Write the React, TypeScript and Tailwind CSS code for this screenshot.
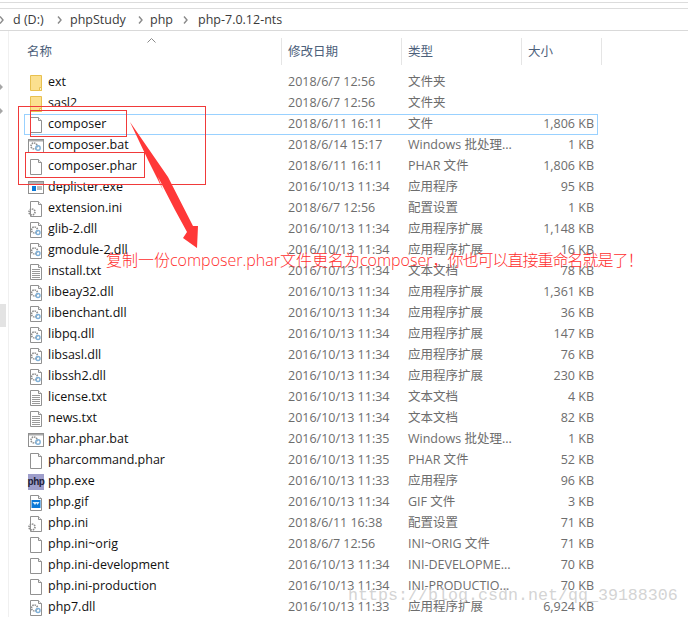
const rows: [string, string, string, string, string][] = [
  ["folder", "ext", "2018/6/7 12:56", "文件夹", ""],
  ["folder", "sasl2", "2018/6/7 12:56", "文件夹", ""],
  ["blank", "composer", "2018/6/11 16:11", "文件", "1,806 KB"],
  ["bat", "composer.bat", "2018/6/14 15:17", "Windows 批处理...", "1 KB"],
  ["blank", "composer.phar", "2018/6/11 16:11", "PHAR 文件", "1,806 KB"],
  ["exe", "deplister.exe", "2016/10/13 11:34", "应用程序", "95 KB"],
  ["ini", "extension.ini", "2018/6/7 12:56", "配置设置", "1 KB"],
  ["dll", "glib-2.dll", "2016/10/13 11:34", "应用程序扩展", "1,148 KB"],
  ["dll", "gmodule-2.dll", "2016/10/13 11:34", "应用程序扩展", "16 KB"],
  ["txt", "install.txt", "2016/10/13 11:34", "文本文档", "78 KB"],
  ["dll", "libeay32.dll", "2016/10/13 11:34", "应用程序扩展", "1,361 KB"],
  ["dll", "libenchant.dll", "2016/10/13 11:34", "应用程序扩展", "36 KB"],
  ["dll", "libpq.dll", "2016/10/13 11:34", "应用程序扩展", "147 KB"],
  ["dll", "libsasl.dll", "2016/10/13 11:34", "应用程序扩展", "76 KB"],
  ["dll", "libssh2.dll", "2016/10/13 11:34", "应用程序扩展", "230 KB"],
  ["txt", "license.txt", "2016/10/13 11:34", "文本文档", "4 KB"],
  ["txt", "news.txt", "2016/10/13 11:34", "文本文档", "82 KB"],
  ["bat", "phar.phar.bat", "2016/10/13 11:35", "Windows 批处理...", "1 KB"],
  ["blank", "pharcommand.phar", "2016/10/13 11:35", "PHAR 文件", "52 KB"],
  ["php", "php.exe", "2016/10/13 11:33", "应用程序", "96 KB"],
  ["gif", "php.gif", "2016/10/13 11:34", "GIF 文件", "3 KB"],
  ["ini", "php.ini", "2018/6/11 16:38", "配置设置", "71 KB"],
  ["blank", "php.ini~orig", "2018/6/7 12:56", "INI~ORIG 文件", "71 KB"],
  ["blank", "php.ini-development", "2016/10/13 11:34", "INI-DEVELOPME...", "70 KB"],
  ["blank", "php.ini-production", "2016/10/13 11:34", "INI-PRODUCTIO...", "70 KB"],
  ["dll", "php7.dll", "2016/10/13 11:33", "应用程序扩展", "6,924 KB"],
]

const page = "M2.5 .5H10.5L13.5 3.5V15.5H2.5Z"

function Gear({ x, y }: { x: number; y: number }) {
  return (
    <g>
      <circle cx={x} cy={y} r="3" fill="none" stroke="#8c8c8c" strokeWidth="1.6" strokeDasharray="1.5 0.8" />
      <circle cx={x} cy={y} r="1" fill="#fff" />
    </g>
  )
}

function FileIcon({ kind }: { kind: string }) {
  if (kind === "folder") {
    return (
      <svg width="16" height="16" viewBox="0 0 16 16">
        <path d="M2.5 .5H13.5V15.5H2.5Z" fill="#fbe08f" stroke="#e8c04f" />
        <path d="M11.5 15.5V12.5H13.5V15.5Z" fill="#fff3c4" stroke="#e8c04f" />
      </svg>
    )
  }
  if (kind === "exe") {
    return (
      <svg width="16" height="16" viewBox="0 0 16 16">
        <rect x=".5" y="1.5" width="15" height="12" fill="#fff" stroke="#8f8f8f" />
        <rect x="1" y="2" width="14" height="2" fill="#b5b5b5" />
        <rect x="4" y="6" width="4" height="5" fill="#0a78d7" />
        <path d="M9 7H14M9 9H14" stroke="#777" />
      </svg>
    )
  }
  if (kind === "bat") {
    return (
      <svg width="16" height="16" viewBox="0 0 16 16">
        <rect x=".5" y="1.5" width="15" height="13" fill="#fff" stroke="#8f8f8f" />
        <rect x="1" y="2" width="14" height="1.5" fill="#a9a9a9" />
        <Gear x={6} y={8} />
        <circle cx="10" cy="10" r="2.2" fill="none" stroke="#7fb0d8" strokeWidth="1.4" />
      </svg>
    )
  }
  if (kind === "php") {
    return (
      <div className="flex h-[16px] w-[16px] items-center justify-center bg-[#9e9ecb] text-[10px] leading-none font-bold tracking-[-0.5px] text-[#1f1f3a] [font-family:'Liberation_Sans',sans-serif]">
        php
      </div>
    )
  }
  return (
    <svg width="16" height="16" viewBox="0 0 16 16">
      <path d={page} fill="#fff" stroke="#919191" />
      <path d="M10.5 .5V3.5H13.5" fill="#f2f2f2" stroke="#919191" />
      {kind === "txt" && <path d="M4 5.5H12M4 7.5H12M4 9.5H12M4 11.5H12M4 13.5H12" stroke="#9a9a9a" />}
      {kind === "dll" && (
        <>
          <Gear x={6.5} y={8} />
          <circle cx="10" cy="10.5" r="2" fill="none" stroke="#7fb0d8" strokeWidth="1.4" />
        </>
      )}
      {kind === "ini" && <Gear x={4} y={11} />}
      {kind === "gif" && (
        <>
          <rect x="3.5" y="5" width="9" height="8" fill="#0a78d7" />
          <path d="M4.5 7H11.5L9.5 10L8.5 8L7 10Z" fill="#d5ecfb" />
        </>
      )}
    </svg>
  )
}

function Chevron() {
  return (
    <svg width="5" height="8" viewBox="0 0 5 8" className="shrink-0">
      <path d="M1 .5L4 4L1 7.5" fill="none" stroke="#8a8a8a" strokeWidth="1.4" />
    </svg>
  )
}

function App() {
  return (
    <div className="relative h-[617px] w-[688px] overflow-hidden bg-white text-[12.5px] [font-family:'Open_Sans','Noto_Sans_CJK_SC',sans-serif]">
      <div className="mt-[2px] h-[7px] border-y border-[#dcdcdc]" />
      <div className="flex h-[22px] items-center border-b border-[#d9d9d9] pt-[1px] text-[#3a3a3a]">
        <div className="-ml-[1px] w-[14px]">
          <Chevron />
        </div>
        <span className="w-[44px]">d (D:)</span>
        <Chevron />
        <span className="ml-[8px] w-[60px]">phpStudy</span>
        <span className="ml-[8px]">
          <Chevron />
        </span>
        <span className="ml-[7px] w-[33px]">php</span>
        <Chevron />
        <span className="ml-[10px]">php-7.0.12-nts</span>
      </div>

      <div className="flex">
        <div className="w-[9px] shrink-0 pt-[50px]">
          <svg width="4" height="34" viewBox="0 0 4 34">
            <path d="M0 3L3 6L0 9ZM0 27L3 30L0 33Z" fill="#a6a6a6" />
          </svg>
          <div className="mt-[189px] h-[23px] w-[6px] bg-[#e3e3e3]" />
        </div>
        <div className="ml-[-1px] min-w-0 flex-1 border-l border-[#f0f0f0]">
          <div className="relative mt-[7px] flex h-[27px] text-[#4c607a]">
            <div className="w-[273px] border-r border-[#e5e5e5] pl-[18px] leading-[27px]">名称</div>
            <div className="w-[120px] border-r border-[#e5e5e5] pl-[6px] leading-[27px]">修改日期</div>
            <div className="w-[120px] border-r border-[#e5e5e5] pl-[6px] leading-[27px]">类型</div>
            <div className="w-[80px] border-r border-[#e5e5e5] pl-[6px] leading-[27px]">大小</div>
            <svg width="9" height="5" viewBox="0 0 9 5" className="absolute top-0 left-[138px]">
              <path d="M.5 4.5L4.5 .5L8.5 4.5" fill="none" stroke="#8a8a8a" />
            </svg>
          </div>
          <div className="mt-[7px] ml-[15px]">
            {rows.map(([kind, name, date, type, size]) => (
              <div
                key={name}
                className={
                  "flex h-[21px] w-[574px] items-center whitespace-nowrap " +
                  (name === "composer" ? "outline-1 -outline-offset-1 outline-[#99d1ff]" : "")
                }
              >
                <div className="flex w-[24px] shrink-0 justify-start pl-[4px]">
                  <FileIcon kind={kind} />
                </div>
                <div className="w-[240px] shrink-0 text-[#111]">{name}</div>
                <div className="w-[120px] shrink-0 text-[#6d6d6d]">{date}</div>
                <div className="w-[120px] shrink-0 text-[#6d6d6d]">{type}</div>
                <div className="w-[66px] shrink-0 text-right text-[#6d6d6d]">{size}</div>
              </div>
            ))}
          </div>
        </div>
      </div>

      {/* annotations drawn over the screenshot */}
      <div className="absolute top-[106px] left-[18px] h-[79px] w-[188px] border border-[#f03a3a]" />
      <div className="absolute top-[110px] left-[30px] h-[27px] w-[97px] border border-[#f03a3a]" />
      <div className="absolute top-[152px] left-[25px] h-[26px] w-[120px] border border-[#f03a3a]" />
      <svg width="688" height="617" viewBox="0 0 688 617" className="pointer-events-none absolute top-0 left-0">
        <path d="M130 122L168 177L193 226L198 226L197 248L183 238L187 232L175 210L158 177L163 190L148 160Z" fill="#ff3838" />
      </svg>
      <div className="absolute top-[248px] left-[106px] text-[16px] leading-[24px] font-light whitespace-nowrap text-[#ff2e2e]">
        复制一份composer.phar文件更名为composer<span className="tracking-[-1px]">，你也可以直接重命名就是了！</span>
      </div>
      <div className="absolute top-[586px] left-[348px] text-[16.67px] leading-[20px] whitespace-nowrap text-[#c9c9c9]/80 [font-family:'Liberation_Mono',monospace]">
        https://blog.csdn.net/qq_39188306
      </div>
    </div>
  )
}

export default App
